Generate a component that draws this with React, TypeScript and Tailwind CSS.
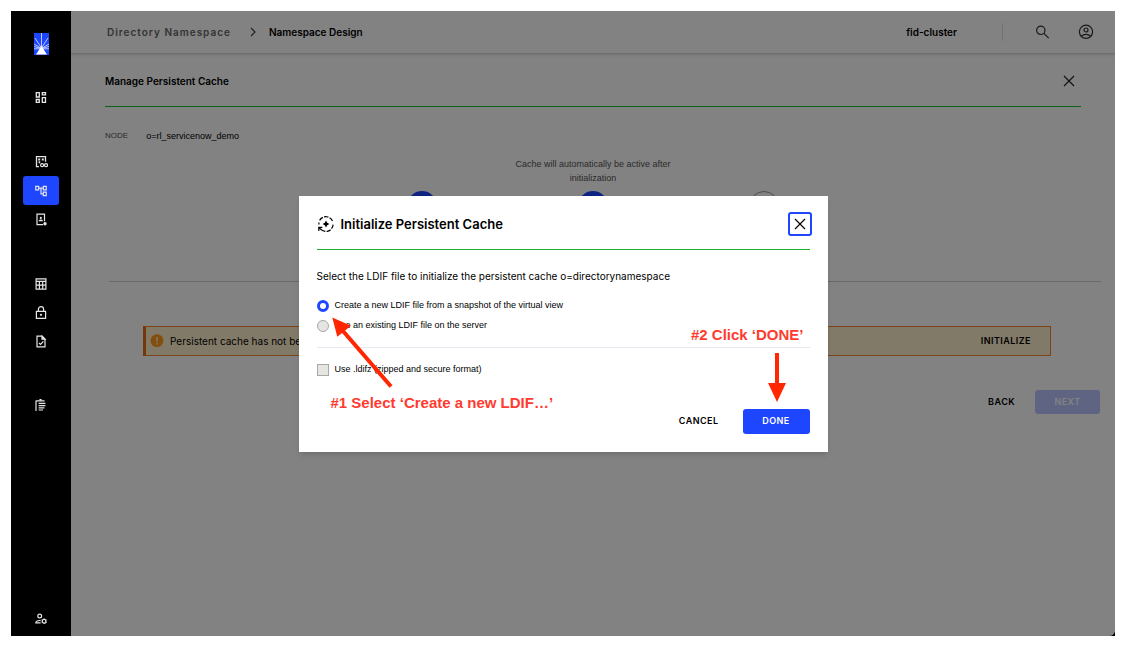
import type { ReactNode } from "react"
import { MdOutlineAccountTree } from "react-icons/md"

function Icon({ children, size = 14 }: { children: ReactNode; size?: number }) {
    return (
        <svg
            width={size}
            height={size}
            viewBox={`0 0 ${size} ${size}`}
            fill="none"
            stroke="currentColor"
            strokeWidth={1.2}
            aria-hidden="true"
        >
            {children}
        </svg>
    )
}

function Logo() {
    return (
        <svg width="15" height="22" viewBox="0 0 15 22" aria-hidden="true">
            <rect width="15" height="22" fill="#1f46ff" />
            <path
                d="M7.5 0V14M7.5 15L1 5M7.5 15L14 5M7.5 15.5L0 11M7.5 15.5L15 11M7.5 15.5L0 13.5M7.5 15.5L15 13.5M0 15.8H15"
                stroke="#cdd6ff"
                strokeWidth="0.9"
            />
            <path d="M7.5 13L13 21.5H2Z" fill="#fff" />
        </svg>
    )
}

const dashboardIcon = (
    <Icon>
        <path d="M2.3 1.6h3v4.4h-3zM2.3 8.5h3v2.8h-3zM8.3 1.6h3.2v2.2H8.3zM8.3 6.6h3.2v4.7H8.3z" strokeWidth={1.3} />
    </Icon>
)

const buildingIcon = (
    <Icon>
        <path d="M5 11.6H2.5V1.6h9v5.2" strokeWidth={1.3} />
        <path d="M4.2 4.5h2M7.8 4.5h2M4.6 7.2h1.6" strokeWidth={2} />
        <circle cx="8.1" cy="10.2" r="1.5" />
        <circle cx="12" cy="10.2" r="1.5" />
    </Icon>
)

const contactIcon = (
    <Icon>
        <path d="M9 11.6H3V1.2h7.5v7" />
        <circle cx="6.8" cy="4.9" r="1.1" fill="currentColor" stroke="none" />
        <path d="M4.6 8.2c0-2.4 4.4-2.4 4.4 0z" fill="currentColor" stroke="none" />
        <circle cx="11" cy="10.8" r="1.7" fill="currentColor" stroke="none" />
    </Icon>
)

const tableIcon = (
    <Icon>
        <path d="M2.1 1.8h9.8v10.4H2.1zM2 4.3h10M2 8.2h10M5.4 4.5V12M8.7 4.5V12" />
    </Icon>
)

const lockIcon = (
    <Icon>
        <path d="M2.4 5.3h9.2v7H2.4zM4.4 5.1V3.3a2.6 2.6 0 0 1 5.2 0v1.8" />
        <circle cx="7" cy="8.8" r="1.1" fill="currentColor" stroke="none" />
    </Icon>
)

const fileCheckIcon = (
    <Icon>
        <path d="M3 1.2h5l3 3v7.6H3z" />
        <path d="M8 1.2v3h3z" fill="currentColor" />
        <path d="M5 8l1.5 1.5L9.4 6.4" />
    </Icon>
)

const reportIcon = (
    <Icon>
        <path d="M2 12V2M1.6 1.9h9M4.6 4.4h6.8M4.6 6.6h6.8M4.6 8.8h5.8M4.6 11h4.4" />
        <path d="M5.4 0.8h2.2" strokeWidth={1.6} />
    </Icon>
)

const userCogIcon = (
    <Icon>
        <circle cx="5.7" cy="4" r="1.9" />
        <path d="M6.6 8.6C4 8.2 1.8 9.2 1.8 10.9H6.6" />
        <circle cx="10.1" cy="9.2" r="1.9" />
        <path d="M10.1 6.4v1M10.1 11v1M7.7 7.8l.9.5M11.6 10.1l.9.5M7.7 10.6l.9-.5M11.6 8.3l.9-.5" strokeWidth={1} />
    </Icon>
)

const navGroups = [
    [{ label: "Dashboard", icon: dashboardIcon }],
    [
        { label: "Data Sources", icon: buildingIcon },
        { label: "Directory Namespace", icon: <MdOutlineAccountTree size={14} />, active: true },
        { label: "Directory Browser", icon: contactIcon },
    ],
    [
        { label: "Tables", icon: tableIcon },
        { label: "Security", icon: lockIcon },
        { label: "Tasks", icon: fileCheckIcon },
    ],
    [{ label: "Reports", icon: reportIcon }],
]

function NavButton({ label, icon, active }: { label: string; icon: ReactNode; active?: boolean }) {
    return (
        <button
            aria-label={label}
            className={
                active
                    ? "flex h-[29px] w-9 items-center justify-center rounded-[3px] bg-[#1f46ff]"
                    : "flex h-[29px] w-9 items-center justify-center"
            }
        >
            {icon}
        </button>
    )
}

function Sidebar() {
    return (
        <nav className="flex w-[60px] shrink-0 flex-col items-center bg-black pt-[22px] pb-[3px] text-[#e6e6e6]">
            <Logo />
            <div className="mt-7 flex flex-col gap-[35px]">
                {navGroups.map((group, index) => (
                    <div key={index}>
                        {group.map((item) => (
                            <NavButton key={item.label} {...item} />
                        ))}
                    </div>
                ))}
            </div>
            <div className="mt-auto">
                <NavButton label="Administration" icon={userCogIcon} />
            </div>
        </nav>
    )
}

function CloseIcon() {
    return (
        <Icon size={12}>
            <path d="M1 1l10 10M11 1L1 11" />
        </Icon>
    )
}

function Header() {
    return (
        <header className="flex h-[43px] items-center border-b border-[#d8d8d8] pr-[21px] pl-9 text-[10px] shadow-sm">
            <a href="#" className="font-semibold tracking-widest text-[#666]">
                Directory Namespace
            </a>
            <span className="mr-2.5 ml-4 text-[#444]">
                <Icon size={12}>
                    <path d="M4 2l4 4-4 4" />
                </Icon>
            </span>
            <span className="font-semibold">Namespace Design</span>
            <span className="ml-auto font-semibold">fid-cluster</span>
            <span className="ml-[45px] h-[18px] w-px bg-[#ddd]" />
            <button aria-label="Search" className="ml-8 text-[#333]">
                <Icon size={15}>
                    <circle cx="5.8" cy="5.3" r="4.2" />
                    <path d="M8.9 8.4l4.8 4.8" />
                </Icon>
            </button>
            <button aria-label="Account" className="ml-7 text-[#333]">
                <Icon size={16}>
                    <circle cx="8" cy="7.8" r="6.6" />
                    <circle cx="8" cy="6" r="2" />
                    <path d="M3.3 12.2c2.5-2.4 6.9-2.4 9.4 0" />
                </Icon>
            </button>
        </header>
    )
}

function CachePage() {
    return (
        <section>
            <div className="mx-[34px] flex items-center justify-between border-b border-[#16c02c] pt-[17px] pr-1.5 pb-[15px]">
                <h1 className="text-[10px] leading-5 font-semibold">Manage Persistent Cache</h1>
                <button aria-label="Close" className="text-[#222]">
                    <CloseIcon />
                </button>
            </div>

            <dl className="mt-[22px] ml-[34px] flex gap-[18px] font-['Liberation_Sans',sans-serif] leading-[14px]">
                <dt className="text-[8px] text-[#555]">NODE</dt>
                <dd className="text-[9px]">o=rl_servicenow_demo</dd>
            </dl>

            <div className="mt-3.5 flex items-end justify-center">
                <div className="flex w-[171px] justify-center">
                    <span className="size-[30px] rounded-full bg-[#1f46ff]" />
                </div>
                <div className="flex w-[171px] flex-col items-center">
                    <p className="px-1 text-center font-['Liberation_Sans',sans-serif] text-[9px] leading-[14px] text-[#555]">
                        Cache will automatically be active after initialization
                    </p>
                    <span className="mt-1.5 size-[30px] rounded-full bg-[#1f46ff]" />
                </div>
                <div className="flex w-[171px] justify-center">
                    <span className="size-[30px] rounded-full border border-[#999]" />
                </div>
            </div>

            <hr className="mt-[60px] mr-3.5 ml-[38px] border-[#ccc]" />

            <div className="mt-11 mr-16 ml-[72px] flex h-[30px] items-center border border-l-3 border-[#f5822a] border-l-[#e56a10] bg-[#ffefcc] pr-[19px] pl-1">
                <svg width="14" height="14" viewBox="0 0 14 14" aria-hidden="true">
                    <circle cx="7" cy="6.6" r="6.4" fill="#ff9a1c" />
                    <path d="M7 3v4.4M7 8.8v1.6" stroke="#ffefcc" strokeWidth="1.5" />
                </svg>
                <p className="ml-1.5 text-[10px]">Persistent cache has not been initialized.</p>
                <button className="ml-auto text-[9px] font-semibold tracking-wider">INITIALIZE</button>
            </div>

            <div className="mt-[34px] mr-[15px] flex items-center justify-end gap-5">
                <button className="text-[9px] font-semibold tracking-wider">BACK</button>
                <button className="h-6 w-[65px] rounded-[3px] bg-[#b8c4ff] text-[9px] font-semibold tracking-wider text-white">
                    NEXT
                </button>
            </div>
        </section>
    )
}

function Annotations() {
    return (
        <div className="pointer-events-none absolute inset-0 font-['Liberation_Sans',sans-serif] text-[15px] leading-4 font-bold text-[#ff3b30]">
            <p className="absolute top-[199px] left-8 whitespace-nowrap">#1 Select ‘Create a new LDIF…’</p>
            <p className="absolute top-[131px] right-6 whitespace-nowrap">#2 Click ‘DONE’</p>
            <svg className="absolute inset-0 size-full" stroke="#ff2600" fill="#ff2600" aria-hidden="true">
                <path d="M92 190.5L44 135" strokeWidth="4" />
                <path d="M33.3 121.5L52 129.8L38.3 140.8Z" stroke="none" />
                <path d="M478 157v32" strokeWidth="4" />
                <path d="M469 187h18l-9 19z" stroke="none" />
            </svg>
        </div>
    )
}

function InitializeDialog() {
    return (
        <div
            role="dialog"
            aria-labelledby="dialog-title"
            className="relative w-[529px] bg-white px-[18px] pt-4 pb-[18px] shadow-md"
        >
            <div className="flex h-[38px] items-start justify-between border-b border-[#1db030]">
                <div className="flex h-6 items-center gap-1.5">
                    <Icon size={18}>
                        <path
                            d="M2.6 5.4A7.2 7.2 0 0 1 15.9 7.2M16.1 9.6A7.2 7.2 0 0 1 3.2 13.6M1.9 9.4V7.6"
                            strokeDasharray="4.4 1.3"
                        />
                        <path d="M1.8 16v-3.6h3.6M2 12.6l2.6 2.4" />
                        <path
                            d="M9 5.6L10.2 7.8 12.4 9 10.2 10.2 9 12.4 7.8 10.2 5.6 9 7.8 7.8z"
                            fill="currentColor"
                            stroke="none"
                        />
                    </Icon>
                    <h2 id="dialog-title" className="text-[13px] leading-6 font-semibold">
                        Initialize Persistent Cache
                    </h2>
                </div>
                <button
                    aria-label="Close dialog"
                    className="mt-0.5 flex size-5 items-center justify-center rounded-[1px] outline-2 outline-[#1f46ff]"
                >
                    <CloseIcon />
                </button>
            </div>

            <p className="mt-[19px] text-[10px] leading-[14px]">
                Select the LDIF file to initialize the persistent cache o=directorynamespace
            </p>

            <div className="mt-[13px] border-b border-[#e8e8f0] pb-[11px] font-['Liberation_Sans',sans-serif] text-[9px]">
                <label className="flex h-5 items-center gap-1.5">
                    <input
                        type="radio"
                        name="source"
                        defaultChecked
                        className="size-3 appearance-none rounded-full border border-[#a8a8a8] bg-[#e6e6e0] checked:border-3 checked:border-[#1f46ff] checked:bg-white"
                    />
                    Create a new LDIF file from a snapshot of the virtual view
                </label>
                <label className="flex h-5 items-center gap-1.5">
                    <input
                        type="radio"
                        name="source"
                        className="size-3 appearance-none rounded-full border border-[#a8a8a8] bg-[#e6e6e0] checked:border-3 checked:border-[#1f46ff] checked:bg-white"
                    />
                    Use an existing LDIF file on the server
                </label>
            </div>

            <label className="mt-3 flex h-5 items-center gap-1.5 font-['Liberation_Sans',sans-serif] text-[9px]">
                <input type="checkbox" className="size-3 appearance-none border border-[#a8a8a8] bg-[#e6e6e0]" />
                Use .ldifz (zipped and secure format)
            </label>

            <div className="mt-[29px] flex items-center justify-end gap-6">
                <button className="text-[9px] font-semibold tracking-wider">CANCEL</button>
                <button className="h-[25px] w-[67px] rounded-[3px] bg-[#1f46ff] text-[9px] font-semibold tracking-wider text-white">
                    DONE
                </button>
            </div>

            <Annotations />
        </div>
    )
}

export default function App() {
    return (
        <div className="flex min-h-screen bg-white pt-[11px] pr-[15px] pb-2.5 pl-[11px] font-['Inter',sans-serif] text-black">
            <div className="relative flex flex-1 bg-black">
                <Sidebar />
                <main className="relative flex-1 overflow-hidden rounded-br-md bg-white">
                    <Header />
                    <CachePage />
                    <div className="absolute inset-0 bg-black/49" />
                </main>
                <div className="absolute inset-0 flex items-center justify-center">
                    <InitializeDialog />
                </div>
            </div>
        </div>
    )
}
